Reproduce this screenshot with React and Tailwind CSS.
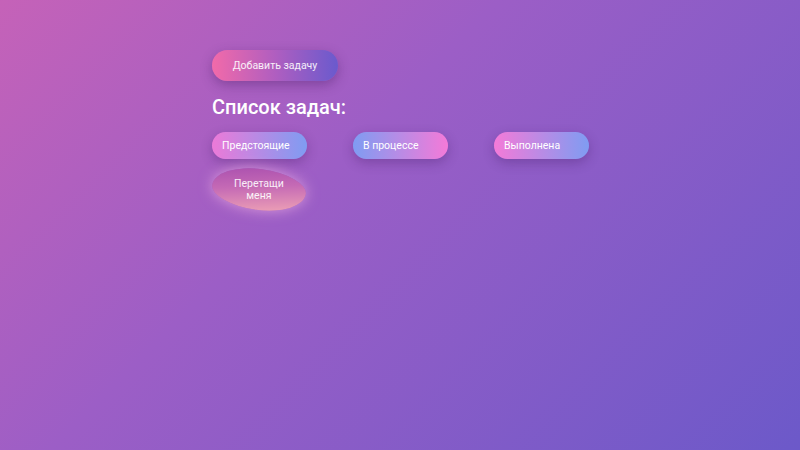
export default function App() {
  return (
    <div
      className="w-[800px] h-[450px] overflow-hidden bg-[linear-gradient(135deg,#c562b8_0%,#9c5ec6_40%,#6c59c9_100%)] text-white"
      style={{ fontFamily: "Roboto, 'Noto Sans', sans-serif" }}
    >
      <div className="pl-[212px] pt-[50px]">
        <button className="w-[126px] h-[31px] rounded-full bg-[linear-gradient(90deg,#f26aa9_0%,#b05ec0_50%,#6a5acd_100%)] text-[10.5px] text-white/90 shadow-[0_4px_12px_rgba(60,20,90,0.35)]">
          Добавить задачу
        </button>
        <h2 className="mt-[13px] text-[20px] leading-[26px] font-medium">Список задач:</h2>
        <div className="mt-[12px] flex gap-[46px]">
          <div className="flex flex-col gap-[9px]">
            <div className="w-[95px] h-[27px] rounded-full bg-[linear-gradient(90deg,#ec7ad8_0%,#7f9cf2_100%)] text-[10.5px] flex items-center pl-[10px] shadow-[0_4px_12px_rgba(60,20,90,0.3)]">
              Предстоящие
            </div>
            <div className="mt-[1px] w-[94px] h-[41px] rounded-[50%_50%_50%_50%/55%_45%_55%_45%] rotate-[8deg] bg-[linear-gradient(170deg,#a64cae_0%,#c56ab5_45%,#f4aab5_100%)] shadow-[0_0_14px_rgba(255,190,230,0.6)] flex items-center justify-center">
              <span className="-rotate-[8deg] text-[10.5px] leading-[12px] text-center text-white/90">
                Перетащи
                <br />
                меня
              </span>
            </div>
          </div>
          <div className="w-[95px] h-[27px] rounded-full bg-[linear-gradient(90deg,#7f9cf2_0%,#f47ad8_100%)] text-[10.5px] flex items-center pl-[10px] shadow-[0_4px_12px_rgba(60,20,90,0.3)]">
            В процессе
          </div>
          <div className="w-[95px] h-[27px] rounded-full bg-[linear-gradient(90deg,#f47ad8_0%,#7f9cf2_100%)] text-[10.5px] flex items-center pl-[10px] shadow-[0_4px_12px_rgba(60,20,90,0.3)]">
            Выполнена
          </div>
        </div>
      </div>
    </div>
  );
}
